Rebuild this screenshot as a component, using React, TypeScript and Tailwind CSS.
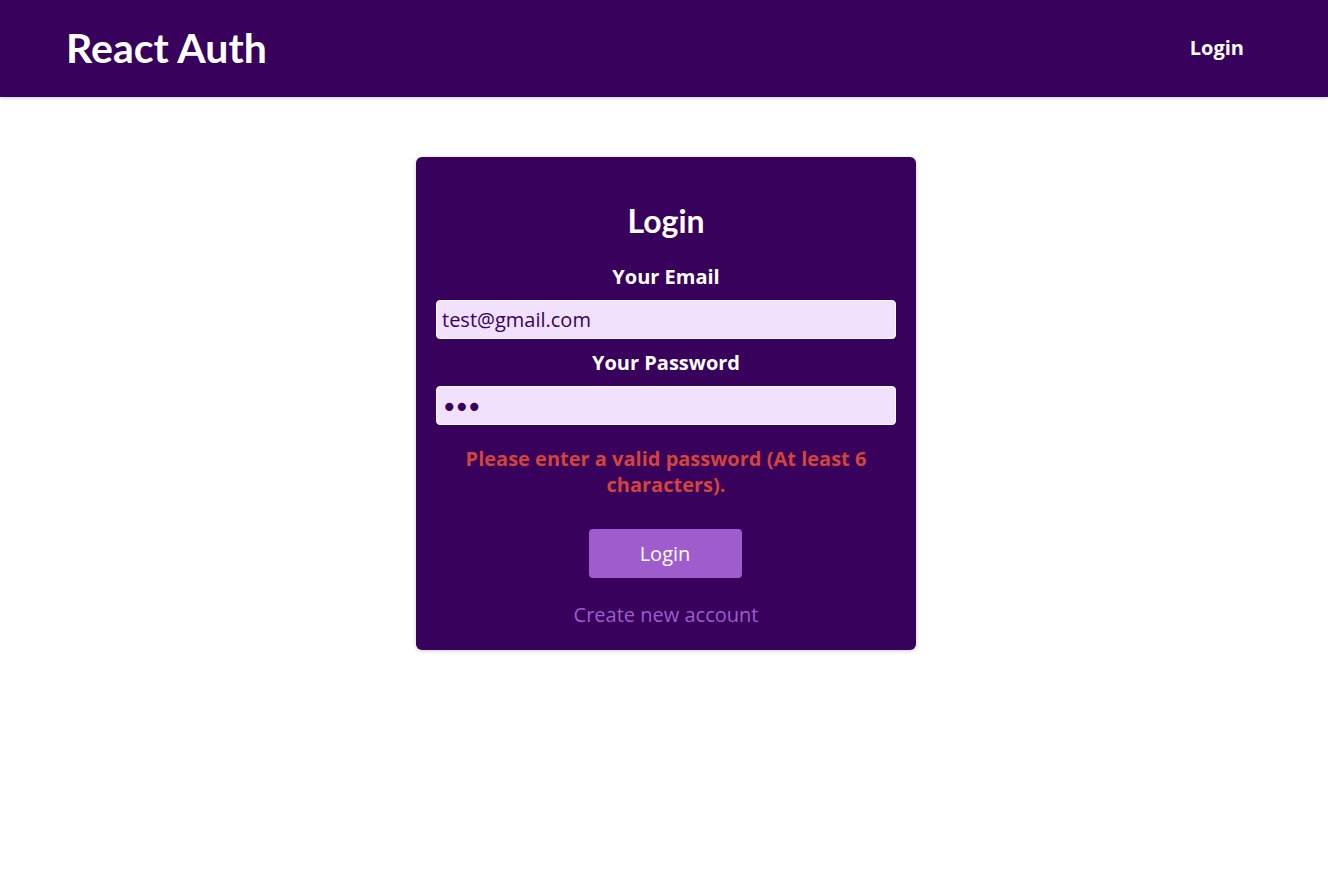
export default function App() {
  return (
    <div className="min-h-screen w-full bg-white font-['Open_Sans',sans-serif]">
      {/* header */}
      <header className="h-[97px] w-full bg-[#38015c] flex items-center justify-between pl-[66px] pr-[84px] shadow-[0_1px_4px_rgba(0,0,0,0.2)]">
        <div className="font-['Lato',sans-serif] font-bold text-[41px] text-white leading-none -mt-[3px]">React Auth</div>
        <nav>
          <a href="#" className="text-white font-bold text-[20px] leading-none">Login</a>
        </nav>
      </header>

      {/* auth card */}
      <div className="flex justify-center pl-[4px] pt-[60px]">
        <section className="w-[500px] bg-[#38015c] rounded-[6px] px-[20px] pt-[20px] pb-[21px] text-center shadow-[0_1px_4px_rgba(0,0,0,0.2)]">
          <h1 className="mt-[24px] font-['Lato',sans-serif] font-bold text-[32px] leading-[40px] text-white">Login</h1>
          <form onSubmit={(e) => e.preventDefault()}>
            <div className="mt-[22px]">
              <label htmlFor="email" className="block text-white font-bold text-[20px] leading-[28px] mb-[9px]">Your Email</label>
              <input
                id="email"
                type="email"
                defaultValue="test@gmail.com"
                className="block w-full h-[39px] bg-[#f1e1fc] text-[#38015c] border border-white rounded-[4px] px-[5px] text-[20px] text-left outline-none"
              />
            </div>
            <div className="mt-[10px]">
              <label htmlFor="password" className="block text-white font-bold text-[20px] leading-[28px] mb-[9px]">Your Password</label>
              <input
                id="password"
                type="password"
                defaultValue="abc"
                className="block w-full h-[39px] bg-[#f1e1fc] text-[#38015c] border border-white rounded-[4px] pl-[4px] pr-[5px] pt-[4px] font-['DejaVu_Sans',sans-serif] text-[28px] leading-none tracking-[-4px] text-left outline-none"
              />
            </div>
            <p className="mt-[21px] text-[#d3443d] font-bold text-[20px] leading-[26px]">
              Please enter a valid password (At least 6 characters).
            </p>
            <div className="mt-[31px] flex flex-col items-center">
              <button type="submit" className="w-[153px] h-[49px] bg-[#9f5ccc] rounded-[4px] text-white text-[20px] -translate-x-[1px]">Login</button>
              <button type="button" className="mt-[23px] text-[#9f5ccc] text-[20px] leading-[28px]">Create new account</button>
            </div>
          </form>
        </section>
      </div>
    </div>
  );
}
